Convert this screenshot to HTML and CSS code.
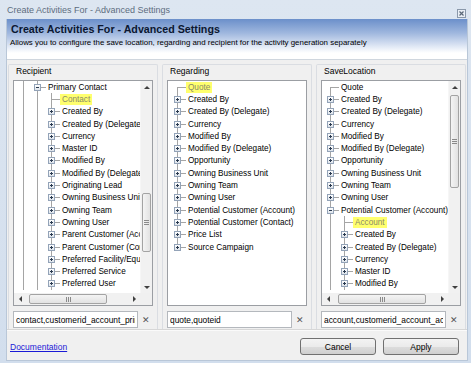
FILE: index.html
```html
<!DOCTYPE html>
<html lang="en">
<head>
    <meta charset="UTF-8">
    <title>Create Activities For - Advanced Settings</title>
    <link rel="stylesheet" href="styles.css">
</head>
<body>
<div class="window">
    <div class="titlebar">
        <span class="title">Create Activities For - Advanced Settings</span>
        <span class="close">
            <svg width="9" height="9" viewBox="0 0 9 9"><rect x="0.5" y="0.5" width="8" height="8" fill="#e9eef5" stroke="#8a98aa"/><path d="M2.5 2.5l4 4M6.5 2.5l-4 4" stroke="#5b6878" stroke-width="1.2"/></svg>
        </span>
    </div>
    <div class="client">
        <div class="header">
            <h1>Create Activities For - Advanced Settings</h1>
            <p>Allows you to configure the save location, regarding and recipient for the activity generation separately</p>
        </div>

        <div class="groups">
            <!-- Recipient -->
            <section class="group">
                <div class="group-label">Recipient</div>
                <div class="tree with-v with-h">
                    <ul class="nodes shift-recipient">
                        <li class="row"><i class="c pipe"></i><i class="c tee"><b class="box minus"></b></i><span class="label">Primary Contact</span></li>
                        <li class="row"><i class="c pipe"></i><i class="c pipe"></i><i class="c tee"></i><span class="label hl">Contact</span></li>
                        <li class="row"><i class="c pipe"></i><i class="c pipe"></i><i class="c tee"><b class="box"></b></i><span class="label">Created By</span></li>
                        <li class="row"><i class="c pipe"></i><i class="c pipe"></i><i class="c tee"><b class="box"></b></i><span class="label">Created By (Delegate)</span></li>
                        <li class="row"><i class="c pipe"></i><i class="c pipe"></i><i class="c tee"><b class="box"></b></i><span class="label">Currency</span></li>
                        <li class="row"><i class="c pipe"></i><i class="c pipe"></i><i class="c tee"><b class="box"></b></i><span class="label">Master ID</span></li>
                        <li class="row"><i class="c pipe"></i><i class="c pipe"></i><i class="c tee"><b class="box"></b></i><span class="label">Modified By</span></li>
                        <li class="row"><i class="c pipe"></i><i class="c pipe"></i><i class="c tee"><b class="box"></b></i><span class="label">Modified By (Delegate)</span></li>
                        <li class="row"><i class="c pipe"></i><i class="c pipe"></i><i class="c tee"><b class="box"></b></i><span class="label">Originating Lead</span></li>
                        <li class="row"><i class="c pipe"></i><i class="c pipe"></i><i class="c tee"><b class="box"></b></i><span class="label">Owning Business Unit</span></li>
                        <li class="row"><i class="c pipe"></i><i class="c pipe"></i><i class="c tee"><b class="box"></b></i><span class="label">Owning Team</span></li>
                        <li class="row"><i class="c pipe"></i><i class="c pipe"></i><i class="c tee"><b class="box"></b></i><span class="label">Owning User</span></li>
                        <li class="row"><i class="c pipe"></i><i class="c pipe"></i><i class="c tee"><b class="box"></b></i><span class="label">Parent Customer (Account)</span></li>
                        <li class="row"><i class="c pipe"></i><i class="c pipe"></i><i class="c tee"><b class="box"></b></i><span class="label">Parent Customer (Contact)</span></li>
                        <li class="row"><i class="c pipe"></i><i class="c pipe"></i><i class="c tee"><b class="box"></b></i><span class="label">Preferred Facility/Equipment</span></li>
                        <li class="row"><i class="c pipe"></i><i class="c pipe"></i><i class="c tee"><b class="box"></b></i><span class="label">Preferred Service</span></li>
                        <li class="row"><i class="c pipe"></i><i class="c pipe"></i><i class="c tee"><b class="box"></b></i><span class="label">Preferred User</span></li>
                    </ul>
                    <div class="vscroll">
                        <span class="arrow up"></span>
                        <span class="track"><span class="thumb" style="--at: 100px; --len: 59px"><span class="grip"></span></span></span>
                        <span class="arrow down"></span>
                    </div>
                    <div class="hscroll">
                        <span class="arrow left"></span>
                        <span class="track"><span class="thumb" style="--at: 3px; --len: 78px"><span class="grip"></span></span></span>
                        <span class="arrow right"></span>
                    </div>
                    <div class="corner"></div>
                </div>
                <div class="field">
                    <input type="text" value="contact,customerid_account_primarycontactid">
                    <span class="clear">&#x2715;</span>
                </div>
            </section>

            <!-- Regarding -->
            <section class="group">
                <div class="group-label">Regarding</div>
                <div class="tree">
                    <ul class="nodes shift-regarding">
                        <li class="row"><i class="c first"></i><span class="label hl">Quote</span></li>
                        <li class="row"><i class="c tee"><b class="box"></b></i><span class="label">Created By</span></li>
                        <li class="row"><i class="c tee"><b class="box"></b></i><span class="label">Created By (Delegate)</span></li>
                        <li class="row"><i class="c tee"><b class="box"></b></i><span class="label">Currency</span></li>
                        <li class="row"><i class="c tee"><b class="box"></b></i><span class="label">Modified By</span></li>
                        <li class="row"><i class="c tee"><b class="box"></b></i><span class="label">Modified By (Delegate)</span></li>
                        <li class="row"><i class="c tee"><b class="box"></b></i><span class="label">Opportunity</span></li>
                        <li class="row"><i class="c tee"><b class="box"></b></i><span class="label">Owning Business Unit</span></li>
                        <li class="row"><i class="c tee"><b class="box"></b></i><span class="label">Owning Team</span></li>
                        <li class="row"><i class="c tee"><b class="box"></b></i><span class="label">Owning User</span></li>
                        <li class="row"><i class="c tee"><b class="box"></b></i><span class="label">Potential Customer (Account)</span></li>
                        <li class="row"><i class="c tee"><b class="box"></b></i><span class="label">Potential Customer (Contact)</span></li>
                        <li class="row"><i class="c tee"><b class="box"></b></i><span class="label">Price List</span></li>
                        <li class="row"><i class="c last"><b class="box"></b></i><span class="label">Source Campaign</span></li>
                    </ul>
                </div>
                <div class="field">
                    <input type="text" value="quote,quoteid">
                    <span class="clear">&#x2715;</span>
                </div>
            </section>

            <!-- SaveLocation -->
            <section class="group">
                <div class="group-label">SaveLocation</div>
                <div class="tree with-v with-h">
                    <ul class="nodes shift-save">
                        <li class="row"><i class="c first"></i><span class="label">Quote</span></li>
                        <li class="row"><i class="c tee"><b class="box"></b></i><span class="label">Created By</span></li>
                        <li class="row"><i class="c tee"><b class="box"></b></i><span class="label">Created By (Delegate)</span></li>
                        <li class="row"><i class="c tee"><b class="box"></b></i><span class="label">Currency</span></li>
                        <li class="row"><i class="c tee"><b class="box"></b></i><span class="label">Modified By</span></li>
                        <li class="row"><i class="c tee"><b class="box"></b></i><span class="label">Modified By (Delegate)</span></li>
                        <li class="row"><i class="c tee"><b class="box"></b></i><span class="label">Opportunity</span></li>
                        <li class="row"><i class="c tee"><b class="box"></b></i><span class="label">Owning Business Unit</span></li>
                        <li class="row"><i class="c tee"><b class="box"></b></i><span class="label">Owning Team</span></li>
                        <li class="row"><i class="c tee"><b class="box"></b></i><span class="label">Owning User</span></li>
                        <li class="row"><i class="c tee"><b class="box minus"></b></i><span class="label">Potential Customer (Account)</span></li>
                        <li class="row"><i class="c pipe"></i><i class="c tee"></i><span class="label hl">Account</span></li>
                        <li class="row"><i class="c pipe"></i><i class="c tee"><b class="box"></b></i><span class="label">Created By</span></li>
                        <li class="row"><i class="c pipe"></i><i class="c tee"><b class="box"></b></i><span class="label">Created By (Delegate)</span></li>
                        <li class="row"><i class="c pipe"></i><i class="c tee"><b class="box"></b></i><span class="label">Currency</span></li>
                        <li class="row"><i class="c pipe"></i><i class="c tee"><b class="box"></b></i><span class="label">Master ID</span></li>
                        <li class="row"><i class="c pipe"></i><i class="c tee"><b class="box"></b></i><span class="label">Modified By</span></li>
                    </ul>
                    <div class="vscroll">
                        <span class="arrow up"></span>
                        <span class="track"><span class="thumb" style="--at: 2px; --len: 93px"><span class="grip"></span></span></span>
                        <span class="arrow down"></span>
                    </div>
                    <div class="hscroll">
                        <span class="arrow left"></span>
                        <span class="track"><span class="thumb" style="--at: 4px; --len: 88px"><span class="grip"></span></span></span>
                        <span class="arrow right"></span>
                    </div>
                    <div class="corner"></div>
                </div>
                <div class="field">
                    <input type="text" value="account,customerid_account_accountid">
                    <span class="clear">&#x2715;</span>
                </div>
            </section>
        </div>

        <div class="footer">
            <a href="#" class="doc-link">Documentation</a>
            <div class="buttons">
                <button>Cancel</button>
                <button>Apply</button>
            </div>
        </div>
    </div>
</div>
</body>
</html>
```

FILE: styles.css
```css
* {
    box-sizing: border-box;
}
body {
    margin: 0;
    background: #ffffff;
    font-family: "Liberation Sans", Arial, sans-serif;
    color: #000;
}
.window {
    width: 471px;
    height: 363px;
    background: linear-gradient(#dde6f1, #d2deed);
    padding: 0 3px 2px 6px;
    display: flex;
    flex-direction: column;
}
.titlebar {
    height: 19px;
    display: flex;
    align-items: center;
    justify-content: space-between;
    padding: 1px 2px 0 1px;
}
.title {
    font-size: 9px;
    color: #5d6d80;
}
.close {
    display: flex;
    margin-top: 6px;
}
.client {
    flex: 1;
    display: flex;
    flex-direction: column;
    background: #f0f0f0;
    border: 1px solid #b9c7d8;
    border-top: none;
}
.header {
    height: 41px;
    padding: 4px 4px 0 3px;
    background: linear-gradient(#6b8fca 0%, #9fb7de 35%, #e3eaf6 70%, #ffffff 85%);
    border-bottom: 1px solid #cfd6de;
}
.header h1 {
    margin: 0 0 0 1px;
    font-size: 10.7px;
    line-height: 13px;
    color: #0b1730;
}
.header p {
    margin: 1px 0 0;
    font-size: 7.9px;
    line-height: 11px;
}

/* three columns */
.groups {
    display: grid;
    grid-template-columns: repeat(3, 150px);
    gap: 4px;
    padding: 4px 2px 0 1px;
    flex: 1;
}
.group {
    border: 1px solid #dadde2;
    border-bottom: none;
    border-radius: 2px 2px 0 0;
    padding: 0 4px 0 4px;
    display: flex;
    flex-direction: column;
}
.group-label {
    font-size: 8.5px;
    line-height: 12px;
    padding: 0 0 3px 3px;
}

/* tree view */
.tree {
    height: 226px;
    border: 1px solid #9b9ea3;
    background: #fff;
    display: grid;
    grid-template-columns: 1fr;
    grid-template-rows: 1fr;
    overflow: hidden;
}
.tree.with-v {
    grid-template-columns: 1fr 12px;
}
.tree.with-h {
    grid-template-rows: 1fr 12px;
}
.nodes {
    list-style: none;
    margin: 0;
    padding: 0;
    overflow: hidden;
    min-width: 0;
}
.shift-recipient { padding-left: 4px; }
.shift-regarding { padding-left: 4px; }
.shift-save { padding-left: 3px; }
.row {
    height: 12.3px;
    display: flex;
    align-items: center;
    white-space: nowrap;
    font-size: 8.2px;
}
.c {
    flex: none;
    width: 14px;
    height: 100%;
    display: flex;
    align-items: center;
    --line: #a5a5a5;
}
.pipe {
    background: linear-gradient(var(--line), var(--line)) 5px 0 / 1px 100% no-repeat;
}
.tee {
    background:
        linear-gradient(var(--line), var(--line)) 5px 0 / 1px 100% no-repeat,
        linear-gradient(var(--line), var(--line)) 5px 50% / 9px 1px no-repeat;
}
.first {
    background:
        linear-gradient(var(--line), var(--line)) 5px 100% / 1px 50% no-repeat,
        linear-gradient(var(--line), var(--line)) 5px 50% / 9px 1px no-repeat;
}
.last {
    background:
        linear-gradient(var(--line), var(--line)) 5px 0 / 1px 50% no-repeat,
        linear-gradient(var(--line), var(--line)) 5px 50% / 9px 1px no-repeat;
}
.box {
    width: 7px;
    height: 7px;
    margin-left: 2px;
    border: 1px solid #93a3b8;
    background:
        linear-gradient(#2a3a50, #2a3a50) 1px 2px / 3px 1px no-repeat,
        linear-gradient(#2a3a50, #2a3a50) 2px 1px / 1px 3px no-repeat,
        linear-gradient(#ffffff, #dde3ea);
}
.box.minus {
    background:
        linear-gradient(#2a3a50, #2a3a50) 1px 2px / 3px 1px no-repeat,
        linear-gradient(#ffffff, #dde3ea);
}
.label {
    padding: 0 2px;
    line-height: 11px;
}
.label.hl {
    background: #ffff6e;
    color: #8a8a6a;
}

/* scrollbars */
.vscroll, .hscroll {
    display: flex;
    background: #f1f1f1;
}
.vscroll {
    flex-direction: column;
    border-left: 1px solid #f6f6f6;
}
.hscroll {
    grid-column: 1;
}
.corner {
    background: #f0f0f0;
}
.arrow {
    flex: none;
    width: 12px;
    height: 12px;
    display: flex;
    align-items: center;
    justify-content: center;
}
.arrow::after {
    content: "";
    border: 3px solid transparent;
}
.arrow.up::after { border-bottom-color: #404040; border-top-width: 0; }
.arrow.down::after { border-top-color: #404040; border-bottom-width: 0; }
.arrow.left::after { border-right-color: #404040; border-left-width: 0; }
.arrow.right::after { border-left-color: #404040; border-right-width: 0; }
.track {
    flex: 1;
    display: flex;
}
.vscroll .track {
    flex-direction: column;
}
.thumb {
    border: 1px solid #a3a3a3;
    border-radius: 2px;
    display: flex;
    align-items: center;
    justify-content: center;
}
.vscroll .thumb {
    margin: var(--at) 1px 0;
    height: var(--len);
    background: linear-gradient(90deg, #f4f4f4, #e2e2e2);
}
.hscroll .thumb {
    margin: 1px 0 1px var(--at);
    width: var(--len);
    background: linear-gradient(#f4f4f4, #e2e2e2);
}
.vscroll .grip {
    width: 5px;
    height: 5px;
    background: repeating-linear-gradient(#8a8a8a 0 1px, transparent 1px 2px);
}
.hscroll .grip {
    width: 5px;
    height: 5px;
    background: repeating-linear-gradient(90deg, #8a8a8a 0 1px, transparent 1px 2px);
}

/* text field under each tree */
.field {
    display: flex;
    align-items: center;
    margin-top: 5px;
}
.field input {
    width: 125px;
    height: 17px;
    border: 1px solid #b4b8bd;
    padding: 0 2px;
    font-family: inherit;
    font-size: 8.4px;
    color: #000;
}
.clear {
    flex: 1;
    text-align: center;
    font-size: 9px;
    color: #555;
}

/* footer */
.footer {
    height: 31px;
    border-top: 1px solid #d7d7d7;
    box-shadow: inset 0 1px 0 #fafafa;
    display: flex;
    align-items: center;
    justify-content: space-between;
    padding: 3px 8px 0 3px;
}
.doc-link {
    font-size: 8.5px;
    color: #1a1ad6;
}
.buttons {
    display: flex;
    gap: 7px;
}
.buttons button {
    width: 76px;
    height: 17px;
    border: 1px solid #707070;
    border-radius: 3px;
    background: linear-gradient(#f3f3f3 0%, #ebebeb 50%, #dddddd 51%, #cfcfcf 100%);
    font-family: inherit;
    font-size: 8.5px;
    padding: 0;
}
```
